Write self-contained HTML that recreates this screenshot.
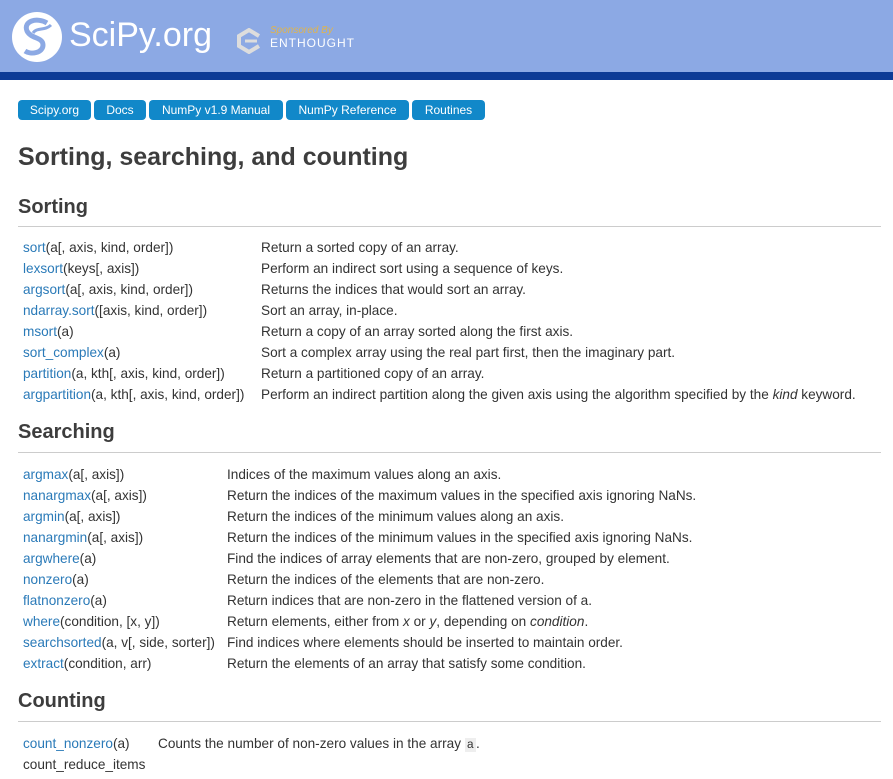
<!DOCTYPE html>
<html><head><meta charset="utf-8"><style>
*{margin:0;padding:0;box-sizing:border-box}
body{width:893px;height:779px;overflow:hidden;background:#fff;font-family:"Liberation Sans",sans-serif;color:#333;position:relative}
.hdr{position:absolute;left:0;top:0;width:893px;height:72px;background:#8ca9e4}
.band{position:absolute;left:0;top:72px;width:893px;height:8px;background:#0d3b96}
.a{position:absolute;white-space:nowrap}
.btn{position:absolute;top:100px;height:20px;background:#1188c9;color:#fff;font-size:12px;line-height:20px;text-align:center;border-radius:4px}
h1{position:absolute;left:18px;top:143px;font-size:25px;font-weight:bold;color:#3d3d3d}
h2{position:absolute;left:18px;font-size:20px;font-weight:bold;color:#3d3d3d}
.hr{position:absolute;left:18px;width:863px;height:1px;background:#ccc}
.r{position:absolute;font-size:13.6px;white-space:nowrap;line-height:16px}
.r a{color:#2a7ab8;text-decoration:none}
code{font-family:"Liberation Mono",monospace;background:#eee;font-size:12px;padding:0 2px}
</style></head><body>
<div class="hdr"></div><div class="band"></div>
<svg class="a" style="left:11px;top:11px" width="52" height="52" viewBox="0 0 52 52"><circle cx="26" cy="26" r="25" fill="#fff"/><path d="M36 12 C26 6 12 10 16 20 C20 28 32 26 32 34 C32 42 20 44 14 40" stroke="#8ca9e4" stroke-width="5" fill="none"/><path d="M40 14 C34 20 26 16 22 22" stroke="#8ca9e4" stroke-width="3" fill="none"/></svg>
<div class="a" style="left:69px;top:16px;font-size:34px;color:#fff">SciPy.org</div>
<svg class="a" style="left:237px;top:28px" width="26" height="26" viewBox="0 0 26 26"><path d="M22 8 L12 2 L2 8 L2 18 L12 24 L22 18" stroke="#ddd" stroke-width="4" fill="none"/><path d="M8 13 L20 13" stroke="#ddd" stroke-width="3"/></svg>
<div class="a" style="left:270px;top:25px;font-size:10px;color:#e0b44c;font-style:italic">Sponsored By</div>
<div class="a" style="left:270px;top:36px;font-size:12px;color:#fff;letter-spacing:1px">ENTHOUGHT</div>
<div class="btn" style="left:18px;width:73px">Scipy.org</div>
<div class="btn" style="left:94px;width:52px">Docs</div>
<div class="btn" style="left:149px;width:134px">NumPy v1.9 Manual</div>
<div class="btn" style="left:286px;width:123px">NumPy Reference</div>
<div class="btn" style="left:412px;width:73px">Routines</div>
<h1>Sorting, searching, and counting</h1>
<h2 style="top:196px">Sorting</h2><div class="hr" style="top:226px"></div>
<div class="r" style="left:23px;top:240px"><a>sort</a>(a[, axis, kind, order])</div><div class="r" style="left:261px;top:240px">Return a sorted copy of an array.</div>
<div class="r" style="left:23px;top:261px"><a>lexsort</a>(keys[, axis])</div><div class="r" style="left:261px;top:261px">Perform an indirect sort using a sequence of keys.</div>
<div class="r" style="left:23px;top:282px"><a>argsort</a>(a[, axis, kind, order])</div><div class="r" style="left:261px;top:282px">Returns the indices that would sort an array.</div>
<div class="r" style="left:23px;top:303px"><a>ndarray.sort</a>([axis, kind, order])</div><div class="r" style="left:261px;top:303px">Sort an array, in-place.</div>
<div class="r" style="left:23px;top:324px"><a>msort</a>(a)</div><div class="r" style="left:261px;top:324px">Return a copy of an array sorted along the first axis.</div>
<div class="r" style="left:23px;top:345px"><a>sort_complex</a>(a)</div><div class="r" style="left:261px;top:345px">Sort a complex array using the real part first, then the imaginary part.</div>
<div class="r" style="left:23px;top:366px"><a>partition</a>(a, kth[, axis, kind, order])</div><div class="r" style="left:261px;top:366px">Return a partitioned copy of an array.</div>
<div class="r" style="left:23px;top:387px"><a>argpartition</a>(a, kth[, axis, kind, order])</div><div class="r" style="left:261px;top:387px">Perform an indirect partition along the given axis using the algorithm specified by the <i>kind</i> keyword.</div>
<h2 style="top:421px">Searching</h2><div class="hr" style="top:452px"></div>
<div class="r" style="left:23px;top:467px"><a>argmax</a>(a[, axis])</div><div class="r" style="left:227px;top:467px">Indices of the maximum values along an axis.</div>
<div class="r" style="left:23px;top:488px"><a>nanargmax</a>(a[, axis])</div><div class="r" style="left:227px;top:488px">Return the indices of the maximum values in the specified axis ignoring NaNs.</div>
<div class="r" style="left:23px;top:509px"><a>argmin</a>(a[, axis])</div><div class="r" style="left:227px;top:509px">Return the indices of the minimum values along an axis.</div>
<div class="r" style="left:23px;top:530px"><a>nanargmin</a>(a[, axis])</div><div class="r" style="left:227px;top:530px">Return the indices of the minimum values in the specified axis ignoring NaNs.</div>
<div class="r" style="left:23px;top:551px"><a>argwhere</a>(a)</div><div class="r" style="left:227px;top:551px">Find the indices of array elements that are non-zero, grouped by element.</div>
<div class="r" style="left:23px;top:572px"><a>nonzero</a>(a)</div><div class="r" style="left:227px;top:572px">Return the indices of the elements that are non-zero.</div>
<div class="r" style="left:23px;top:593px"><a>flatnonzero</a>(a)</div><div class="r" style="left:227px;top:593px">Return indices that are non-zero in the flattened version of a.</div>
<div class="r" style="left:23px;top:614px"><a>where</a>(condition, [x, y])</div><div class="r" style="left:227px;top:614px">Return elements, either from <i>x</i> or <i>y</i>, depending on <i>condition</i>.</div>
<div class="r" style="left:23px;top:635px"><a>searchsorted</a>(a, v[, side, sorter])</div><div class="r" style="left:227px;top:635px">Find indices where elements should be inserted to maintain order.</div>
<div class="r" style="left:23px;top:656px"><a>extract</a>(condition, arr)</div><div class="r" style="left:227px;top:656px">Return the elements of an array that satisfy some condition.</div>
<h2 style="top:690px">Counting</h2><div class="hr" style="top:721px"></div>
<div class="r" style="left:23px;top:736px"><a>count_nonzero</a>(a)</div><div class="r" style="left:158px;top:736px">Counts the number of non-zero values in the array <code>a</code>.</div>
<div class="r" style="left:23px;top:757px">count_reduce_items</div>
</body></html>
